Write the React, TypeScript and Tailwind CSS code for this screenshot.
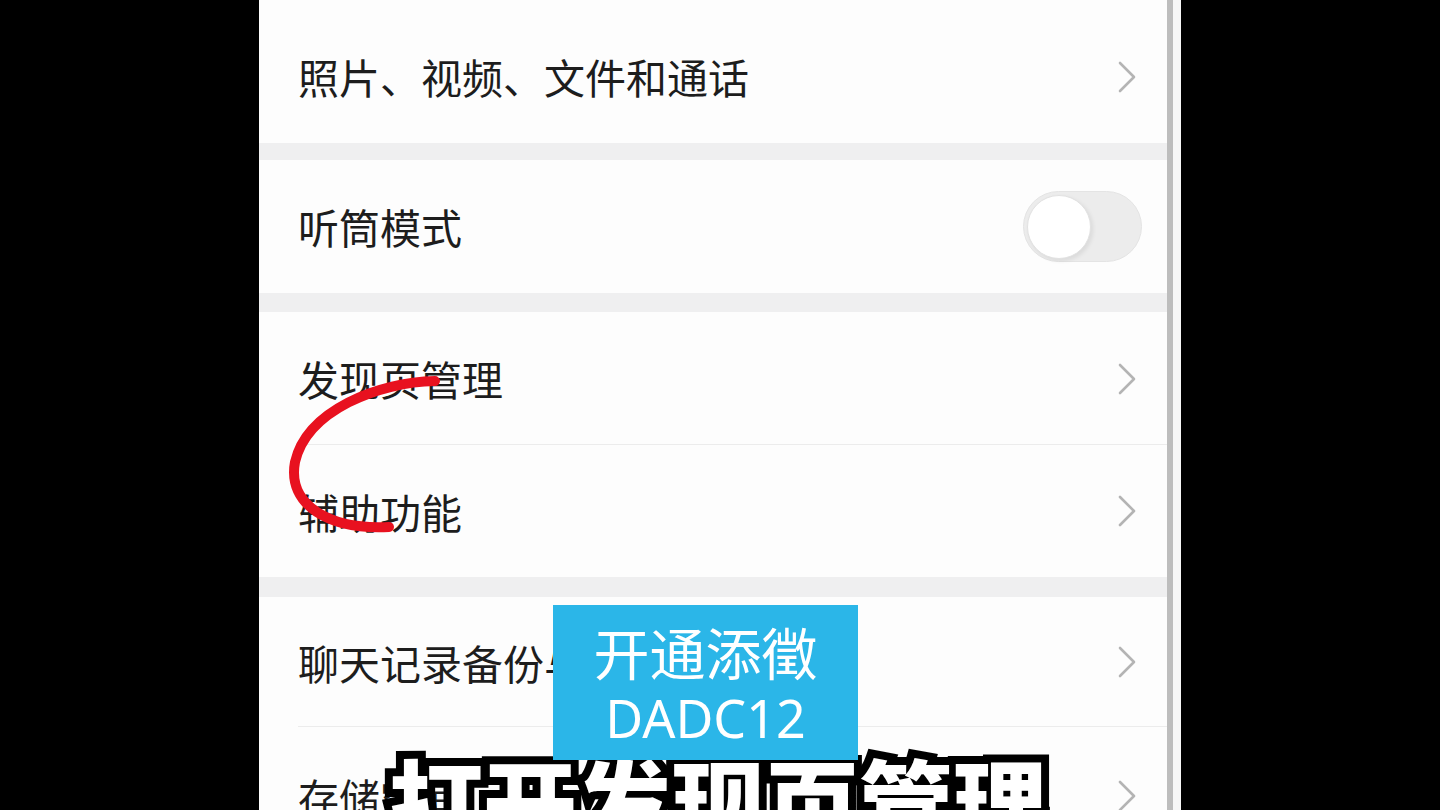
const CJK = "font-['Noto_Sans_CJK_SC','Noto_Sans',sans-serif]";

function Chevron() {
  return (
    <svg className="mr-[5px]" width="20" height="32" viewBox="0 0 20 32" fill="none">
      <polyline points="3,2 17,16 3,30" stroke="#b4b4b4" strokeWidth="2.6" strokeLinecap="round" strokeLinejoin="round" />
    </svg>
  );
}

function Row({ label, h, toggle, divider }: { label: string; h: string; toggle?: boolean; divider?: boolean }) {
  return (
    <div className={`relative flex shrink-0 items-center justify-between bg-[#fdfdfd] pl-[39px] pr-[25px] ${h}`}>
      <span className={`${CJK} text-[41px] leading-none text-[#1d1d1d]`}>{label}</span>
      {toggle ? (
        <div className="flex h-[71px] w-[119px] items-center rounded-full border border-[#e4e4e4] bg-[#ececec] pl-[3px]">
          <div className="h-[64px] w-[64px] rounded-full border border-[#e2e2e2] bg-white shadow-[2px_2px_4px_rgba(0,0,0,0.08)]" />
        </div>
      ) : (
        <Chevron />
      )}
      {divider && <div className="absolute bottom-0 left-[39px] right-0 h-px bg-[#ececec]" />}
    </div>
  );
}

function Gap({ h }: { h: string }) {
  return <div className={`shrink-0 bg-[#efeff0] ${h}`} />;
}

export default function App() {
  return (
    <div className="flex h-[810px] w-[1440px] overflow-hidden bg-black">
      <div className="ml-[259px] flex h-full w-[922px]">
        <div className="relative flex w-[908px] flex-col overflow-hidden">
          <Row label="照片、视频、文件和通话" h="h-[143px] pt-[10px]" />
          <Gap h="h-[17px]" />
          <Row label="听筒模式" h="h-[133px]" toggle />
          <Gap h="h-[19px]" />
          <Row label="发现页管理" h="h-[133px]" divider />
          <Row label="辅助功能" h="h-[132px]" />
          <Gap h="h-[20px]" />
          <Row label="聊天记录备份与迁移" h="h-[130px]" divider />
          <Row label="存储空间" h="h-[136px] pt-[2px]" />

          {/* red annotation stroke */}
          <svg className="pointer-events-none absolute left-0 top-0" width="908" height="810">
            <path
              d="M176 381 C120 382 48 410 36 462 C28 505 70 530 130 527"
              fill="none"
              stroke="#e8111f"
              strokeWidth="10"
              strokeLinecap="round"
            />
          </svg>

          {/* subtitle */}
          <div
            className={`absolute left-[130px] top-[752px] whitespace-nowrap ${CJK} text-[94px] font-black leading-none text-white [-webkit-text-stroke:16px_#000] [paint-order:stroke_fill]`}
          >
            打开发现页管理
          </div>

          {/* watermark box */}
          <div className="absolute left-[294px] top-[605px] flex h-[155px] w-[305px] flex-col items-center justify-center bg-[#2bb6e8] text-white">
            <span className={`${CJK} text-[56px] leading-[70px]`}>开通添徵</span>
            <span className="font-['Noto_Sans',sans-serif] text-[52px] leading-[64px]">DADC12</span>
          </div>
        </div>
        <div className="w-[6px] bg-[#bdbdbd]" />
        <div className="w-[8px] bg-[#f7f7f7]" />
      </div>
    </div>
  );
}
